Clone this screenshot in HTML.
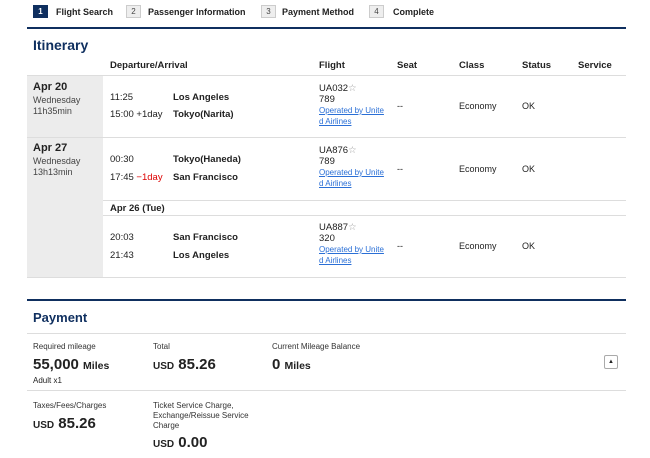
<!DOCTYPE html>
<html><head><meta charset="utf-8"><style>
*{margin:0;padding:0;box-sizing:border-box}
body{width:650px;height:458px;background:#fff;font-family:"Liberation Sans",sans-serif;color:#222;position:relative;overflow:hidden;font-size:9px}
.a{position:absolute;white-space:nowrap}
.b{font-weight:bold}
.step{position:absolute;top:5px;height:13px;width:15px;border:1px solid #ccc;background:#eee;font-size:8px;text-align:center;line-height:11px;color:#444}
.hl{position:absolute;left:27px;width:599px;height:1px;background:#ddd}
.lk{color:#2a6fd6;text-decoration:underline;font-size:8px}
.h{font-weight:bold;font-size:9.5px}
.t{font-size:9.5px}
</style></head><body>
<div class="step" style="left:33px;background:#0f2f5f;border-color:#0f2f5f;color:#fff;font-weight:bold">1</div>
<div class="a b" style="left:56px;top:7px">Flight Search</div>
<div class="step" style="left:126px">2</div>
<div class="a b" style="left:148px;top:7px">Passenger Information</div>
<div class="step" style="left:261px">3</div>
<div class="a b" style="left:282px;top:7px">Payment Method</div>
<div class="step" style="left:369px">4</div>
<div class="a b" style="left:393px;top:7px">Complete</div>

<div class="a" style="left:27px;top:27px;width:599px;height:2px;background:#0f2f5f"></div>
<div class="a b" style="left:33px;top:37px;font-size:14px;color:#0f2f5f">Itinerary</div>
<div class="a h" style="left:110px;top:60px">Departure/Arrival</div>
<div class="a h" style="left:319px;top:60px">Flight</div>
<div class="a h" style="left:397px;top:60px">Seat</div>
<div class="a h" style="left:459px;top:60px">Class</div>
<div class="a h" style="left:522px;top:60px">Status</div>
<div class="a h" style="left:578px;top:60px">Service</div>
<div class="hl" style="top:75px"></div>
<div class="a" style="left:27px;top:76px;width:76px;height:201px;background:#ececec"></div>
<div class="hl" style="top:137px"></div>
<div class="hl" style="left:103px;width:523px;top:200px"></div>
<div class="hl" style="left:103px;width:523px;top:215px"></div>
<div class="hl" style="top:277px"></div>

<div class="a b" style="left:33px;top:81px;font-size:11px">Apr 20</div>
<div class="a" style="left:33px;top:95px;color:#444;line-height:11px">Wednesday<br>11h35min</div>
<div class="a t" style="left:110px;top:92px">11:25</div>
<div class="a b t" style="left:173px;top:92px">Los Angeles</div>
<div class="a t" style="left:110px;top:109px">15:00 +1day</div>
<div class="a b t" style="left:173px;top:109px">Tokyo(Narita)</div>
<div class="a t" style="left:319px;top:83px;line-height:11px">UA032<span style="color:#999">☆</span><br>789<br><span class="lk">Operated by Unite</span><br><span class="lk">d Airlines</span></div>
<div class="a" style="left:397px;top:101px">--</div>
<div class="a" style="left:459px;top:101px">Economy</div>
<div class="a" style="left:522px;top:101px">OK</div>

<div class="a b" style="left:33px;top:142px;font-size:11px">Apr 27</div>
<div class="a" style="left:33px;top:156px;color:#444;line-height:11px">Wednesday<br>13h13min</div>
<div class="a t" style="left:110px;top:154px">00:30</div>
<div class="a b t" style="left:173px;top:154px">Tokyo(Haneda)</div>
<div class="a t" style="left:110px;top:172px">17:45 <span style="color:#d00">−1day</span></div>
<div class="a b t" style="left:173px;top:172px">San Francisco</div>
<div class="a t" style="left:319px;top:145px;line-height:11px">UA876<span style="color:#999">☆</span><br>789<br><span class="lk">Operated by Unite</span><br><span class="lk">d Airlines</span></div>
<div class="a" style="left:397px;top:164px">--</div>
<div class="a" style="left:459px;top:164px">Economy</div>
<div class="a" style="left:522px;top:164px">OK</div>

<div class="a b t" style="left:110px;top:203px">Apr 26 (Tue)</div>

<div class="a t" style="left:110px;top:232px">20:03</div>
<div class="a b t" style="left:173px;top:232px">San Francisco</div>
<div class="a t" style="left:110px;top:250px">21:43</div>
<div class="a b t" style="left:173px;top:250px">Los Angeles</div>
<div class="a t" style="left:319px;top:222px;line-height:11px">UA887<span style="color:#999">☆</span><br>320<br><span class="lk">Operated by Unite</span><br><span class="lk">d Airlines</span></div>
<div class="a" style="left:397px;top:241px">--</div>
<div class="a" style="left:459px;top:241px">Economy</div>
<div class="a" style="left:522px;top:241px">OK</div>

<div class="a" style="left:27px;top:299px;width:599px;height:2px;background:#0f2f5f"></div>
<div class="a b" style="left:33px;top:310px;font-size:13px;color:#0f2f5f">Payment</div>
<div class="hl" style="top:333px"></div>
<div class="a" style="left:33px;top:342px;font-size:8px;color:#333">Required mileage</div>
<div class="a b" style="left:33px;top:356px;font-size:15px">55,000 <span style="font-size:10.5px">Miles</span></div>
<div class="a" style="left:33px;top:376px;font-size:8px">Adult x1</div>
<div class="a" style="left:153px;top:342px;font-size:8px;color:#333">Total</div>
<div class="a b" style="left:153px;top:356px;font-size:15px"><span style="font-size:10px">USD</span> 85.26</div>
<div class="a" style="left:272px;top:342px;font-size:8px;color:#333">Current Mileage Balance</div>
<div class="a b" style="left:272px;top:356px;font-size:15px">0 <span style="font-size:10.5px">Miles</span></div>
<div class="a" style="left:604px;top:355px;width:14px;height:14px;border:1px solid #aaa;border-radius:2px;font-size:6px;text-align:center;line-height:12px">▲</div>
<div class="hl" style="top:390px"></div>
<div class="a" style="left:33px;top:401px;font-size:8px;color:#333">Taxes/Fees/Charges</div>
<div class="a b" style="left:33px;top:415px;font-size:15px"><span style="font-size:10px">USD</span> 85.26</div>
<div class="a" style="left:153px;top:401px;font-size:8px;color:#333;line-height:10px">Ticket Service Charge,<br>Exchange/Reissue Service<br>Charge</div>
<div class="a b" style="left:153px;top:434px;font-size:15px"><span style="font-size:10px">USD</span> 0.00</div>
</body></html>
